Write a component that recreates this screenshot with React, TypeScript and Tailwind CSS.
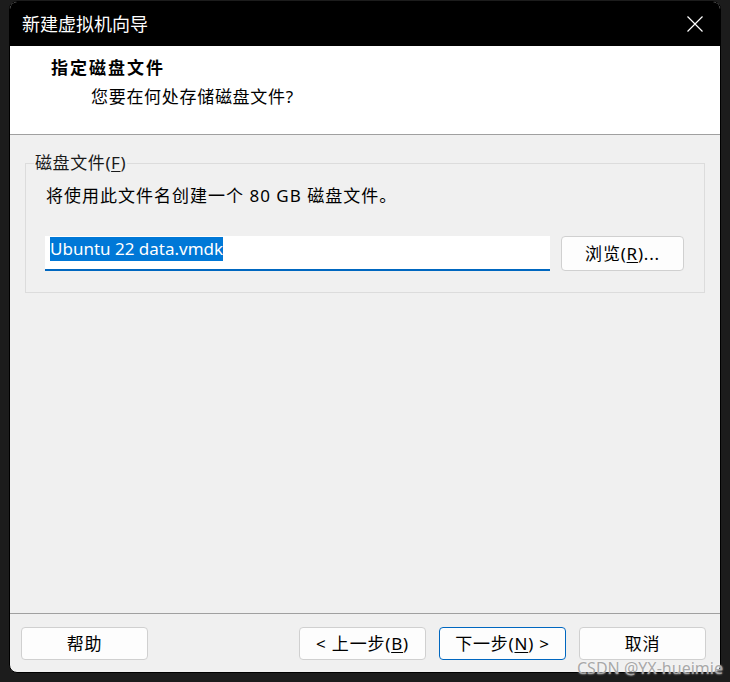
const font = "font-['Noto_Sans','Noto_Sans_CJK_SC',sans-serif]";

function Btn({
  children,
  size = "h-[33px] w-[127px]",
  className = "",
  primary = false,
}: {
  children: React.ReactNode;
  size?: string;
  className?: string;
  primary?: boolean;
}) {
  return (
    <div
      className={
        "flex items-center justify-center rounded-[4px] border bg-[#fdfdfd] text-[17px] tracking-[0.8px] text-black " +
        (primary ? "border-[#0067c0] " : "border-[#d0d0d0] ") +
        size +
        " " +
        className
      }
    >
      {children}
    </div>
  );
}

function CloseIcon() {
  return (
    <svg width="16" height="16" viewBox="0 0 16 16" className="text-white">
      <path d="M0.5 0.5 L15.5 15.5 M15.5 0.5 L0.5 15.5" stroke="currentColor" strokeWidth="1.2" />
    </svg>
  );
}

export default function App() {
  return (
    <div className={`relative h-[682px] w-[730px] bg-[#1c1c1c] pl-[9px] pt-[1px] ${font}`}>
      <div className="flex h-[672px] w-[712px] flex-col overflow-hidden rounded-[8px] border border-black bg-[#f0f0f0]">
        {/* title bar */}
        <div className="flex h-[44px] shrink-0 items-center justify-between bg-black pl-[12px] pr-[17px]">
          <span className="text-[18px] text-white">新建虚拟机向导</span>
          <CloseIcon />
        </div>

        {/* header */}
        <div className="h-[89px] shrink-0 border-b border-[#a0a0a0] bg-white pl-[41px] pt-[10px]">
          <div className="text-[17px] font-bold leading-6 tracking-[2px] text-black">指定磁盘文件</div>
          <div className="mt-[5px] pl-[40px] text-[17px] leading-6 tracking-[0.7px] text-black">
            您要在何处存储磁盘文件?
          </div>
        </div>

        {/* body */}
        <div className="flex-1 px-[15px] pt-[28px]">
          <div className="relative h-[130px] border border-[#dcdcdc] pl-[19px] pt-[20px]">
            <span className="absolute -top-[13px] left-[8px] bg-[#f0f0f0] px-[1px] text-[17px] leading-6 tracking-[0.6px] text-[#1a1a1a]">
              磁盘文件(<span className="underline underline-offset-2">F</span>)
            </span>
            <div className="pl-[1px] text-[17px] leading-6 tracking-[1px] text-black">
              将使用此文件名创建一个 80 GB 磁盘文件。
            </div>
            <div className="mt-[28px] flex items-center gap-[11px]">
              <div className="flex h-[35px] w-[505px] items-start border-b-2 border-[#0067c0] bg-white pl-[5px] pt-[1px]">
                <span className="bg-[#0078d7] text-[17px] leading-6 text-white">Ubuntu 22 data.vmdk</span>
              </div>
              <Btn size="h-[35px] w-[123px]">
                浏览(<span className="underline underline-offset-2">R</span>)...
              </Btn>
            </div>
          </div>
        </div>

        {/* footer */}
        <div className="flex h-[59px] shrink-0 items-start border-t border-[#a0a0a0] pl-[11px] pt-[13px]">
          <Btn>帮助</Btn>
          <Btn className="ml-[151px]">
            &lt; 上一步(<span className="underline underline-offset-2">B</span>)
          </Btn>
          <Btn primary className="ml-[13px]">
            下一步(<span className="underline underline-offset-2">N</span>) &gt;
          </Btn>
          <Btn className="ml-[13px]">取消</Btn>
        </div>
      </div>

      <span className="absolute left-[577px] top-[656px] text-[16px] leading-6 text-[#a8a8a8] [text-shadow:0_0_2px_#ffffff]">
        CSDN @YX-hueimie
      </span>
    </div>
  );
}
